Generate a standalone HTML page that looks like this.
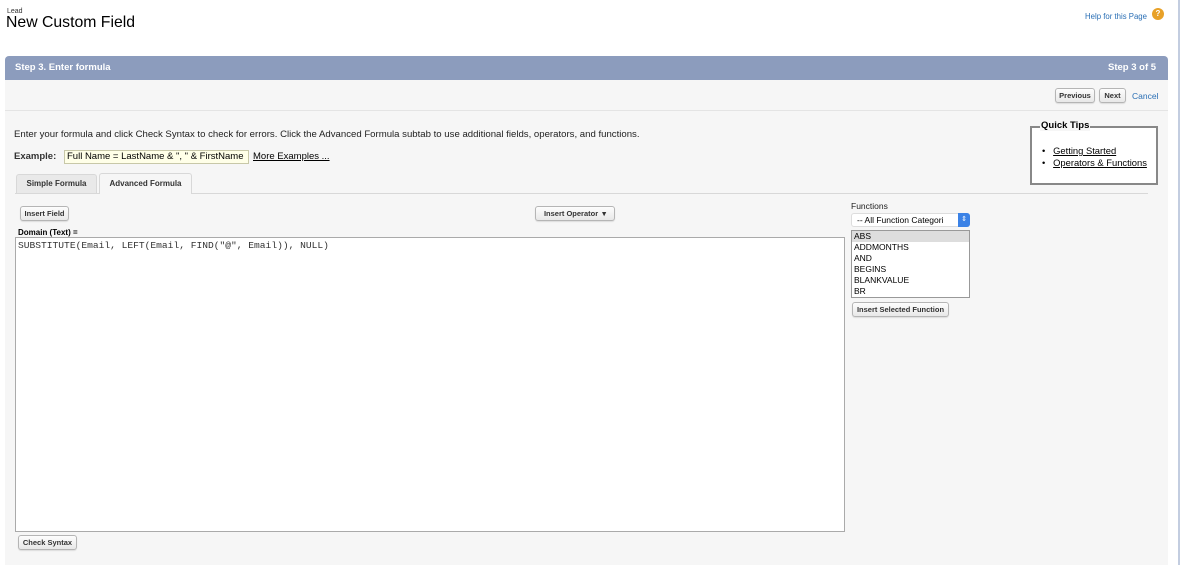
<!DOCTYPE html>
<html><head><style>
*{box-sizing:border-box;margin:0;padding:0}
body{width:1180px;height:565px;background:#fff;font-family:"Liberation Sans",Arial,sans-serif;position:relative;overflow:hidden;color:#000}
.a{position:absolute}
.btn{position:absolute;background:linear-gradient(#fdfdfd,#e8e8e8);border:1px solid #b5b5b5;border-radius:3px;font-size:7.5px;font-weight:bold;color:#333;text-align:center;line-height:14px;box-shadow:0 1px 1px rgba(0,0,0,.1)}
.lb div{height:11px;line-height:11px;padding-left:2px;font-size:8.5px}
u{text-decoration:underline}
</style></head><body>
<div class="a" style="left:7px;top:8px;font-size:7px;color:#333">Lead</div>
<div class="a" style="left:6px;top:14px;font-size:15.8px;color:#000">New Custom Field</div>
<div class="a" style="left:1085px;top:12px;font-size:7.8px;color:#2a6fb5">Help for this Page</div>
<div class="a" style="left:1152px;top:8px;width:12px;height:12px;border-radius:50%;background:#e8a128;color:#fff;font-size:8px;font-weight:bold;text-align:center;line-height:12px">?</div>
<div class="a" style="left:1178px;top:0;width:2px;height:565px;background:#c3cde0"></div>
<div class="a" style="left:5px;top:56px;width:1163px;height:509px;background:#f6f6f6;border-radius:4px 4px 0 0"></div>
<div class="a" style="left:5px;top:56px;width:1163px;height:24px;background:#8c9cbd;border-radius:4px 4px 0 0"></div>
<div class="a" style="left:15px;top:62px;font-size:9.5px;font-weight:bold;color:#fff">Step 3. Enter formula</div>
<div class="a" style="left:1108px;top:62px;font-size:9.5px;font-weight:bold;color:#fff">Step 3 of 5</div>
<div class="btn" style="left:1055px;top:88px;width:40px;height:15px">Previous</div>
<div class="btn" style="left:1099px;top:88px;width:27px;height:15px">Next</div>
<div class="a" style="left:1132px;top:91px;font-size:8.5px;color:#2a6fb5">Cancel</div>
<div class="a" style="left:5px;top:110px;width:1163px;height:1px;background:#e4e4e4"></div>
<div class="a" style="left:14px;top:129px;font-size:9.6px;color:#222">Enter your formula and click Check Syntax to check for errors. Click the Advanced Formula subtab to use additional fields, operators, and functions.</div>
<div class="a" style="left:14px;top:151px;font-size:9.5px;font-weight:bold;color:#333">Example:</div>
<div class="a" style="left:64px;top:150px;width:185px;height:14px;background:#ffffe8;border:1px solid #c8c8a8;font-size:9.5px;line-height:12px;padding-left:2px;white-space:nowrap;overflow:hidden">Full Name = LastName &amp; ", " &amp; FirstName</div>
<div class="a" style="left:253px;top:151px;font-size:9.5px"><u>More Examples ...</u></div>
<div class="a" style="left:1030px;top:126px;width:128px;height:59px;border:2px solid #888;background:#fff"></div>
<div class="a" style="left:1040px;top:120px;font-size:9.5px;font-weight:bold;background:#f6f6f6;padding:0 1px">Quick Tips</div>
<div class="a" style="left:1042px;top:145px;font-size:9.4px;line-height:12px">•&nbsp;&nbsp; <u>Getting Started</u><br>•&nbsp;&nbsp; <u>Operators &amp; Functions</u></div>
<div class="a" style="left:15px;top:193px;width:1133px;height:1px;background:#d8d8d8"></div>
<div class="a" style="left:16px;top:174px;width:81px;height:19px;background:#e9e9e9;border:1px solid #d8d8d8;border-bottom:none;border-radius:3px 3px 0 0;font-size:8px;font-weight:bold;color:#333;text-align:center;line-height:18px">Simple Formula</div>
<div class="a" style="left:99px;top:173px;width:93px;height:21px;background:#f6f6f6;border:1px solid #d8d8d8;border-bottom:none;border-radius:3px 3px 0 0;font-size:8px;font-weight:bold;color:#333;text-align:center;line-height:19px">Advanced Formula</div>
<div class="btn" style="left:20px;top:206px;width:49px;height:15px">Insert Field</div>
<div class="btn" style="left:535px;top:206px;width:80px;height:15px">Insert Operator&nbsp; ▾</div>
<div class="a" style="left:18px;top:228px;font-size:8px;font-weight:bold">Domain (Text) =</div>
<div class="a" style="left:15px;top:237px;width:830px;height:295px;background:#fff;border:1px solid #aaa;font-family:'Liberation Mono',monospace;font-size:9.6px;padding:2px 2px;color:#333">SUBSTITUTE(Email, LEFT(Email, FIND("@", Email)), NULL)</div>
<div class="btn" style="left:18px;top:535px;width:59px;height:15px">Check Syntax</div>
<div class="a" style="left:851px;top:201px;font-size:8.5px;color:#222">Functions</div>
<div class="a" style="left:851px;top:213px;width:119px;height:14px;background:#fff;border:1px solid #ddd;border-radius:3px;font-size:8.5px;line-height:12px;padding-left:5px">-- All Function Categori</div>
<div class="a" style="left:958px;top:213px;width:12px;height:14px;background:#3b82e6;border-radius:0 3px 3px 0;color:#fff;font-size:7px;text-align:center;line-height:14px">⇕</div>
<div class="a lb" style="left:851px;top:230px;width:119px;height:68px;background:#fff;border:1px solid #999">
<div style="background:#ddd">ABS</div><div>ADDMONTHS</div><div>AND</div><div>BEGINS</div><div>BLANKVALUE</div><div>BR</div></div>
<div class="btn" style="left:852px;top:302px;width:97px;height:15px">Insert Selected Function</div>
</body></html>
